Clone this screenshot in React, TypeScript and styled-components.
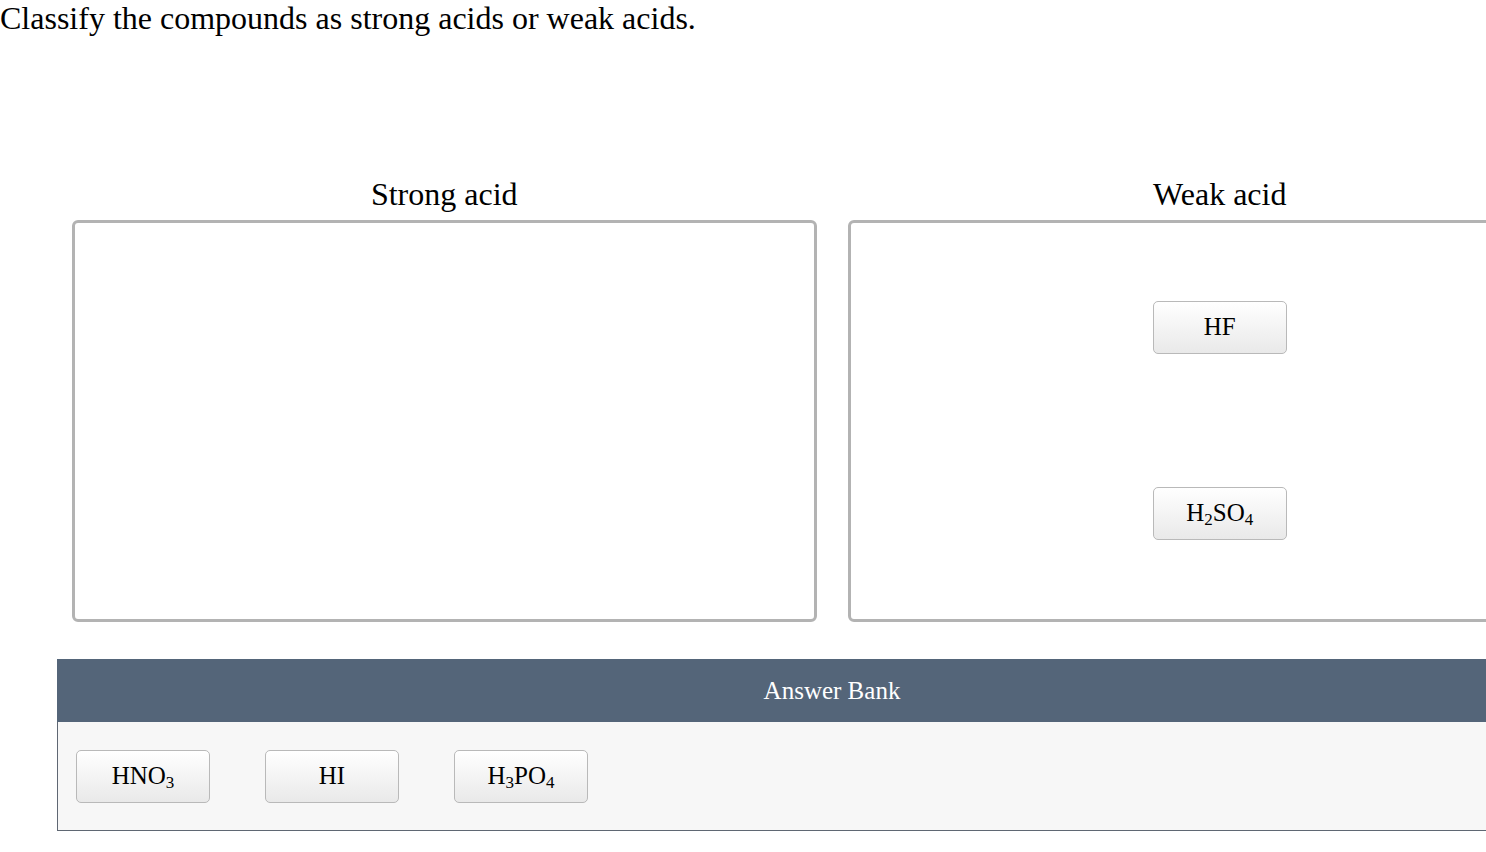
import React from "react";
import styled, { createGlobalStyle } from "styled-components";

const GlobalStyle = createGlobalStyle`
  html, body {
    margin: 0;
    padding: 0;
    overflow: hidden;
    background: #ffffff;
  }
  body {
    font-family: "Liberation Serif", "Times New Roman", serif;
    color: #000;
  }
`;

const Page = styled.div`
  display: flex;
  flex-direction: column;
  width: 1610px;
`;

const Prompt = styled.h1`
  margin: 0;
  font-size: 32px;
  font-weight: 400;
  line-height: 37px;
`;

const Workspace = styled.div`
  display: flex;
  flex-direction: column;
  width: 1550px;
  margin: 139px 0 0 57px;
`;

const Categories = styled.div`
  display: flex;
  gap: 31px;
  padding: 0 15px;
`;

const Category = styled.div`
  display: flex;
  flex-direction: column;
  width: 746px;
`;

const CategoryLabel = styled.div`
  font-size: 32px;
  line-height: 37px;
  text-align: center;
  margin-bottom: 7px;
`;

const DropZone = styled.div`
  box-sizing: border-box;
  height: 402px;
  border: 3px solid #b3b3b3;
  border-radius: 6px;
  display: flex;
  flex-direction: column;
  align-items: center;
  gap: 133px;
  padding-top: 78px;
`;

const Bank = styled.div`
  margin-top: 37px;
  display: flex;
  flex-direction: column;
`;

const BankHeader = styled.div`
  height: 63px;
  background: #546579;
  color: #ffffff;
  font-size: 25px;
  display: flex;
  align-items: center;
  justify-content: center;
`;

const BankBody = styled.div`
  display: flex;
  gap: 55px;
  padding: 28px 18px 27px;
  background: #f7f7f7;
  border-left: 1px solid #5f6773;
  border-bottom: 1px solid #5f6773;
`;

const Chip = styled.div`
  box-sizing: border-box;
  width: 134px;
  height: 53px;
  border: 1px solid #b9b9b9;
  border-radius: 5px;
  background: linear-gradient(to bottom, #ffffff 0%, #e9e9e9 100%);
  display: flex;
  align-items: center;
  justify-content: center;
  font-size: 25px;
  line-height: 1;
  padding-bottom: 3px;
`;

const Sub = styled.span`
  font-size: 17px;
  position: relative;
  top: 7px;
`;

const Formula = ({ parts }: { parts: (string | [string])[] }) => (
  <Chip>
    {parts.map((p, i) =>
      typeof p === "string" ? <span key={i}>{p}</span> : <Sub key={i}>{p[0]}</Sub>
    )}
  </Chip>
);

export default function App() {
  return (
    <>
      <GlobalStyle />
      <Page>
        <Prompt>Classify the compounds as strong acids or weak acids.</Prompt>
        <Workspace>
          <Categories>
            <Category>
              <CategoryLabel>Strong acid</CategoryLabel>
              <DropZone />
            </Category>
            <Category>
              <CategoryLabel>Weak acid</CategoryLabel>
              <DropZone>
                <Formula parts={["HF"]} />
                <Formula parts={["H", ["2"], "SO", ["4"]]} />
              </DropZone>
            </Category>
          </Categories>
          <Bank>
            <BankHeader>Answer Bank</BankHeader>
            <BankBody>
              <Formula parts={["HNO", ["3"]]} />
              <Formula parts={["HI"]} />
              <Formula parts={["H", ["3"], "PO", ["4"]]} />
            </BankBody>
          </Bank>
        </Workspace>
      </Page>
    </>
  );
}
